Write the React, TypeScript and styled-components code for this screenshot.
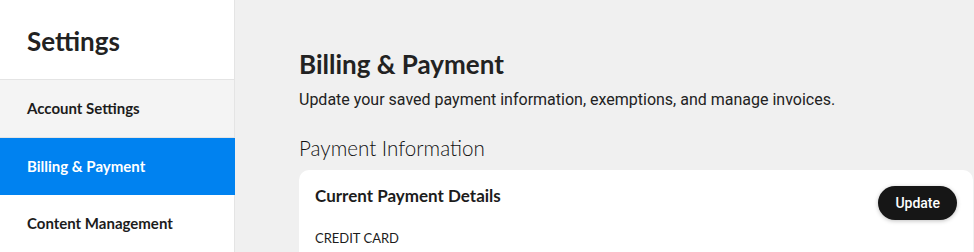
import * as React from 'react';
import styled, { createGlobalStyle } from 'styled-components';

const GlobalStyle = createGlobalStyle`
  html, body {
    margin: 0;
    padding: 0;
    background: #f0f0f0;
  }
  * {
    box-sizing: border-box;
  }
`;

const Layout = styled.div`
  display: flex;
  height: 252px;
  overflow: hidden;
  font-family: Lato, "Noto Sans", sans-serif;
  color: #1c1c1c;
`;

const Sidebar = styled.aside`
  width: 235px;
  flex-shrink: 0;
  background: #ffffff;
  border-right: 1px solid #e4e4e4;
  display: flex;
  flex-direction: column;
`;

const SidebarHeader = styled.div`
  height: 80px;
  padding: 2px 27px 0;
  display: flex;
  align-items: center;
  border-bottom: 1px solid #e4e4e4;
`;

const SidebarTitle = styled.h1`
  margin: 0;
  font-size: 26px;
  font-weight: 700;
  color: #222222;
`;

const NavItem = styled.div<{ $active?: boolean; $muted?: boolean }>`
  height: ${(p) => (p.$muted ? '58px' : '57px')};
  padding: 0 27px 2px;
  display: flex;
  align-items: center;
  font-size: 15px;
  font-weight: 700;
  margin-right: ${(p) => (p.$active ? '-1px' : '0')};
  color: ${(p) => (p.$active ? '#ffffff' : '#1c1c1c')};
  background: ${(p) => (p.$active ? '#0082f0' : p.$muted ? '#f4f4f4' : '#ffffff')};
  border-bottom: ${(p) => (p.$muted ? '1px solid #e4e4e4' : 'none')};
`;

const Main = styled.main`
  flex: 1;
  padding: 47px 1px 0 64px;
  min-width: 0;
`;

const PageTitle = styled.h2`
  margin: 0;
  font-size: 26px;
  font-weight: 700;
  color: #222222;
  line-height: 34px;
`;

const PageSubtitle = styled.p`
  margin: 7px 0 0;
  font-family: Roboto, sans-serif;
  font-size: 16px;
  line-height: 24px;
  color: #222222;
`;

const SectionTitle = styled.h3`
  margin: 22px 0 0;
  font-size: 20.6px;
  font-weight: 300;
  line-height: 28px;
  color: #111111;
`;

const Card = styled.section`
  margin-top: 8px;
  background: #ffffff;
  border-radius: 10px 10px 0 0;
  padding: 16px;
`;

const CardHeader = styled.div`
  display: flex;
  justify-content: space-between;
  align-items: flex-start;
`;

const CardTitle = styled.h4`
  margin: 0;
  font-size: 17px;
  font-weight: 700;
  line-height: 20px;
  color: #1c1c1c;
`;

const UpdateButton = styled.button`
  height: 34px;
  padding: 0 17px;
  border: none;
  border-radius: 17px;
  background: #161616;
  color: #ffffff;
  font-family: Roboto, sans-serif;
  font-size: 14px;
  font-weight: 500;
  box-shadow: 0 1px 4px rgba(0, 0, 0, 0.25);
  cursor: pointer;
`;

const PaymentType = styled.div`
  margin-top: 10px;
  font-size: 13px;
  line-height: 16px;
  color: #1c1c1c;
`;

export default function App() {
  return (
    <>
      <GlobalStyle />
      <Layout>
        <Sidebar>
          <SidebarHeader>
            <SidebarTitle>Settings</SidebarTitle>
          </SidebarHeader>
          <NavItem $muted>Account Settings</NavItem>
          <NavItem $active>Billing &amp; Payment</NavItem>
          <NavItem>Content Management</NavItem>
        </Sidebar>
        <Main>
          <PageTitle>Billing &amp; Payment</PageTitle>
          <PageSubtitle>
            Update your saved payment information, exemptions, and manage invoices.
          </PageSubtitle>
          <SectionTitle>Payment Information</SectionTitle>
          <Card>
            <CardHeader>
              <CardTitle>Current Payment Details</CardTitle>
              <UpdateButton>Update</UpdateButton>
            </CardHeader>
            <PaymentType>CREDIT CARD</PaymentType>
          </Card>
        </Main>
      </Layout>
    </>
  );
}
